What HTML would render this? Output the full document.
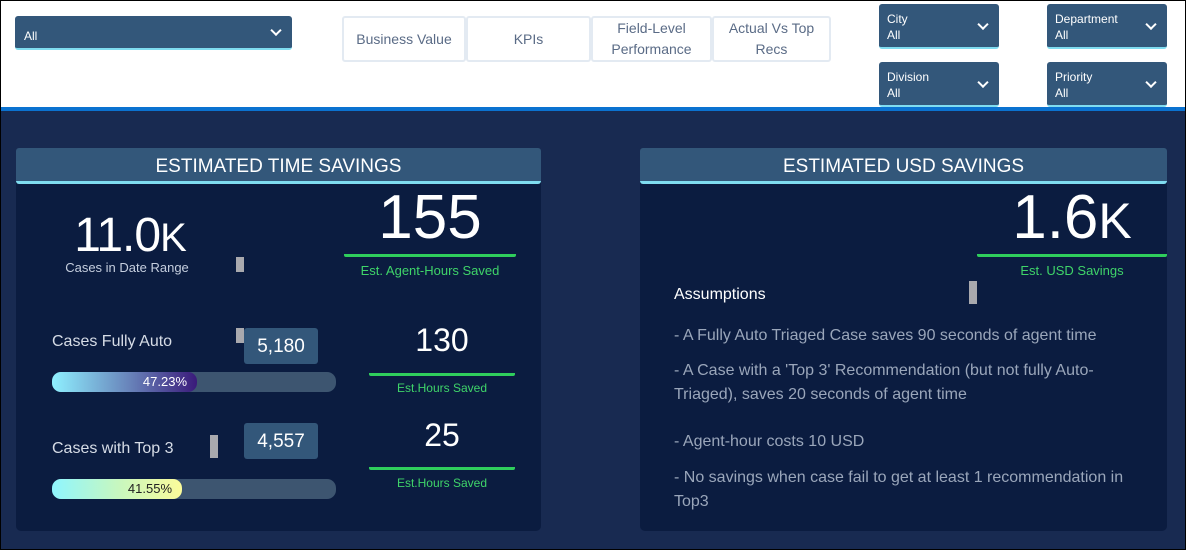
<!DOCTYPE html>
<html><head><meta charset="utf-8"><style>
*{box-sizing:border-box;margin:0;padding:0}
body{width:1186px;height:550px;overflow:hidden;font-family:"Liberation Sans",sans-serif;background:#000;position:relative}
.a{position:absolute}
#top{left:1px;top:1px;width:1184px;height:106px;background:#fff}
#line{left:1px;top:107px;width:1184px;height:4px;background:#0b72d0}
#main{left:1px;top:111px;width:1184px;height:438px;background:#182a51}
.dd{background:#33577a;border-radius:3px;border-bottom:2px solid #7fdcf0;color:#fff;font-size:12px}
.chev{position:absolute;right:12px;top:50%;width:8px;height:8px;border-right:2px solid #fff;border-bottom:2px solid #fff;transform:translateY(-70%) rotate(45deg)}
.tab{border:2px solid #e3eaf2;border-radius:3px;color:#5a6b86;font-size:14px;display:flex;align-items:center;justify-content:center;text-align:center;line-height:21px;background:#fff}
.panel{background:#0b1c40;border-radius:5px}
.hdr{background:#33577a;border-bottom:3px solid #7fdcf0;color:#fff;font-size:19px;text-align:center;line-height:37px;border-radius:3px}
.w{color:#fff}
.g{color:#3fd469;font-size:12px;text-align:center}
.gl{height:3px;background:#2fce5c;border-radius:0 0 2px 2px}
.gr{background:#a9a9ae;width:8px}
.num{background:#33577a;border-radius:3px;color:#fff;font-size:19px;text-align:center;line-height:37px}
.bar{background:#3d5570;border-radius:9px;height:20px}
.txt{color:#9aa6ba;font-size:16px;line-height:24px}
</style></head><body>
<div id="top" class="a"></div>
<div id="line" class="a"></div>
<div id="main" class="a"></div>

<div class="a dd" style="left:15px;top:16px;width:277px;height:34px;"><span class="a" style="left:9px;top:13px">All</span><div class="chev"></div></div>

<div class="a tab" style="left:342px;top:16px;width:124px;height:46px">Business Value</div>
<div class="a tab" style="left:466px;top:16px;width:125px;height:46px">KPIs</div>
<div class="a tab" style="left:591px;top:16px;width:121px;height:46px">Field-Level<br>Performance</div>
<div class="a tab" style="left:712px;top:16px;width:119px;height:46px">Actual Vs Top<br>Recs</div>

<div class="a dd" style="left:879px;top:4px;width:120px;height:45px"><span class="a" style="left:8px;top:8px">City</span><span class="a" style="left:8px;top:24px">All</span><div class="chev"></div></div>
<div class="a dd" style="left:1047px;top:4px;width:120px;height:45px"><span class="a" style="left:8px;top:8px">Department</span><span class="a" style="left:8px;top:24px">All</span><div class="chev"></div></div>
<div class="a dd" style="left:879px;top:62px;width:120px;height:45px"><span class="a" style="left:8px;top:8px">Division</span><span class="a" style="left:8px;top:24px">All</span><div class="chev"></div></div>
<div class="a dd" style="left:1047px;top:62px;width:120px;height:45px"><span class="a" style="left:8px;top:8px">Priority</span><span class="a" style="left:8px;top:24px">All</span><div class="chev"></div></div>

<!-- left panel -->
<div class="a panel" style="left:16px;top:150px;width:525px;height:381px"></div>
<div class="a hdr" style="left:16px;top:148px;width:525px;height:36px">ESTIMATED TIME SAVINGS</div>
<div class="a w" style="left:60px;top:208px;width:140px;text-align:center;font-size:48px;line-height:56px;letter-spacing:-1px">11.0<span style="font-size:40px">K</span></div>
<div class="a" style="left:57px;top:260px;width:140px;text-align:center;color:#c5cede;font-size:13px">Cases in Date Range</div>
<div class="a gr" style="left:236px;top:257px;height:15px"></div>
<div class="a w" style="left:344px;top:182px;width:172px;text-align:center;font-size:62px;line-height:72px">155</div>
<div class="a gl" style="left:344px;top:254px;width:172px"></div>
<div class="a g" style="left:344px;top:263px;width:172px;font-size:13px">Est. Agent-Hours Saved</div>

<div class="a" style="left:52px;top:333px;color:#d6dce6;font-size:16px">Cases Fully Auto</div>
<div class="a gr" style="left:236px;top:328px;height:15px"></div>
<div class="a num" style="left:244px;top:328px;width:74px;height:36px">5,180</div>
<div class="a bar" style="left:52px;top:372px;width:284px"></div>
<div class="a" style="left:52px;top:372px;width:145px;height:20px;border-radius:9px;background:linear-gradient(90deg,#8ff0ff,#6780b8 55%,#3a1a7a);color:#fff;font-size:13px;line-height:20px;text-align:right;padding-right:10px">47.23%</div>
<div class="a w" style="left:369px;top:322px;width:146px;text-align:center;font-size:32px">130</div>
<div class="a gl" style="left:369px;top:373px;width:146px"></div>
<div class="a g" style="left:369px;top:381px;width:146px">Est.Hours Saved</div>

<div class="a" style="left:52px;top:440px;color:#d6dce6;font-size:16px">Cases with Top 3</div>
<div class="a gr" style="left:210px;top:435px;height:23px"></div>
<div class="a num" style="left:244px;top:423px;width:74px;height:36px">4,557</div>
<div class="a bar" style="left:52px;top:479px;width:284px"></div>
<div class="a" style="left:52px;top:479px;width:130px;height:20px;border-radius:9px;background:linear-gradient(90deg,#8ff6ff,#c6f7c0 50%,#fbfb9a);color:#222;font-size:13px;line-height:20px;text-align:right;padding-right:10px">41.55%</div>
<div class="a w" style="left:369px;top:417px;width:146px;text-align:center;font-size:32px">25</div>
<div class="a gl" style="left:369px;top:467px;width:146px"></div>
<div class="a g" style="left:369px;top:476px;width:146px">Est.Hours Saved</div>

<!-- right panel -->
<div class="a panel" style="left:640px;top:150px;width:527px;height:381px"></div>
<div class="a hdr" style="left:640px;top:148px;width:527px;height:36px">ESTIMATED USD SAVINGS</div>
<div class="a w" style="left:977px;top:182px;width:190px;text-align:center;font-size:62px;line-height:72px">1.6<span style="font-size:50px">K</span></div>
<div class="a gl" style="left:977px;top:254px;width:190px"></div>
<div class="a g" style="left:977px;top:263px;width:190px;font-size:13px">Est. USD Savings</div>
<div class="a" style="left:674px;top:286px;color:#fff;font-size:16px">Assumptions</div>
<div class="a gr" style="left:969px;top:281px;height:23px"></div>
<div class="a txt" style="left:674px;top:324px;width:460px">- A Fully Auto Triaged Case saves 90 seconds of agent time</div>
<div class="a txt" style="left:674px;top:359px;width:460px">- A Case with a 'Top 3' Recommendation (but not fully Auto-Triaged), saves 20 seconds of agent time</div>
<div class="a txt" style="left:674px;top:430px;width:460px">- Agent-hour costs 10 USD</div>
<div class="a txt" style="left:674px;top:466px;width:470px">- No savings when case fail to get at least 1 recommendation in Top3</div>
</body></html>
